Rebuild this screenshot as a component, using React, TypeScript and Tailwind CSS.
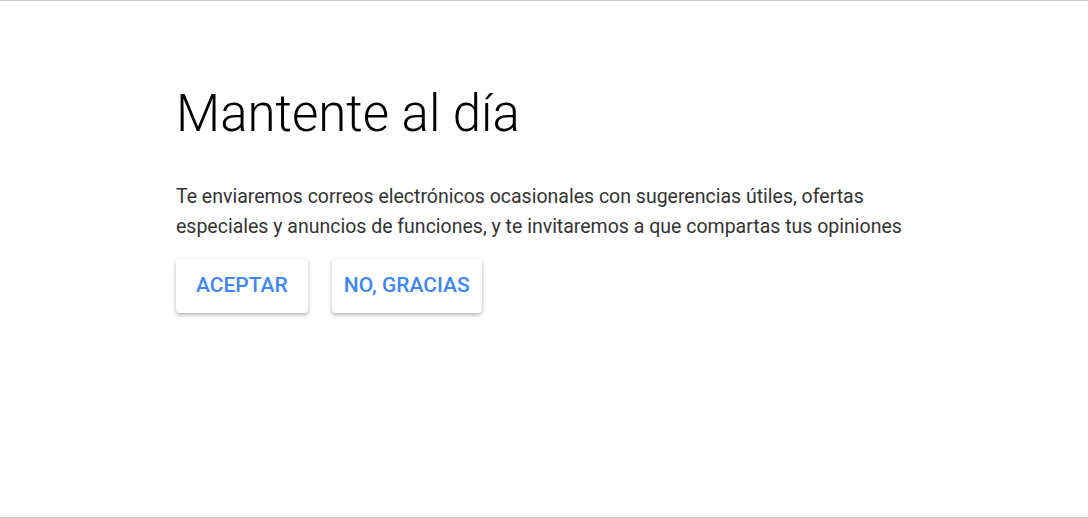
export default function App() {
  return (
    <div className="h-[518px] w-full bg-white border-y border-[#c8c8c8] font-['Roboto',sans-serif] overflow-hidden">
      <div className="pl-[176px] pt-[83px]">
        <h1 className="text-[51px] leading-[60px] font-light text-black">Mantente al día</h1>
        <p className="mt-[38px] text-[19.5px] leading-[30px] text-[#333333] w-[760px]">
          Te enviaremos correos electrónicos ocasionales con sugerencias útiles, ofertas especiales y anuncios de funciones, y te invitaremos a que compartas tus opiniones
        </p>
        <div className="mt-[17px] flex gap-[24px]">
          <button className="h-[54px] px-[20px] rounded-[4px] bg-white text-[#4285f4] text-[21px] font-medium shadow-[0_2px_4px_rgba(0,0,0,0.3)]">ACEPTAR</button>
          <button className="h-[54px] px-[12px] rounded-[4px] bg-white text-[#4285f4] text-[21px] font-medium shadow-[0_2px_4px_rgba(0,0,0,0.3)]">NO, GRACIAS</button>
        </div>
      </div>
    </div>
  );
}
